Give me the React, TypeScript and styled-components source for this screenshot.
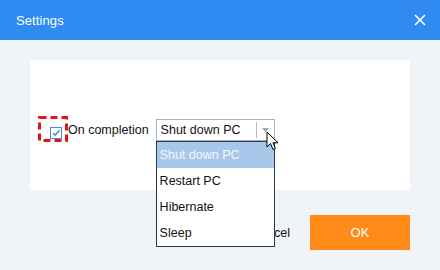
import React from "react";
import styled, { createGlobalStyle } from "styled-components";

const Global = createGlobalStyle`
  html, body { margin: 0; padding: 0; }
  body {
    width: 440px;
    height: 270px;
    overflow: hidden;
    background: #f0f4f9;
    font-family: "Liberation Sans", Arial, sans-serif;
  }
`;

const Dialog = styled.div`
  width: 440px;
  height: 270px;
  display: flex;
  flex-direction: column;
  background: #f0f4f9;
`;

const TitleBar = styled.div`
  height: 40px;
  flex: none;
  background: #2f8bf1;
  display: flex;
  align-items: center;
  justify-content: space-between;
  padding: 0 13px 0 16px;
  color: #ffffff;
`;

const Title = styled.span`
  font-size: 13px;
  letter-spacing: 0.1px;
`;

const CloseButton = styled.button`
  width: 14px;
  height: 14px;
  padding: 0;
  border: none;
  background: transparent;
  display: flex;
  align-items: center;
  justify-content: center;
`;

const Body = styled.div`
  padding: 20px 30px 0;
  display: flex;
  flex-direction: column;
`;

const Panel = styled.div`
  height: 130px;
  background: #ffffff;
  border-radius: 2px;
  display: flex;
  flex-direction: column;
  padding: 59px 0 0 20px;
  box-sizing: border-box;
`;

const Row = styled.div`
  display: flex;
  align-items: center;
  height: 22px;
`;

const CheckWrap = styled.div`
  position: relative;
  width: 12px;
  height: 12px;
  margin-top: 2px;
  margin-right: 6px;
`;

const Highlight = styled.svg`
  position: absolute;
  left: -12px;
  top: -9px;
  width: 30px;
  height: 26px;
  overflow: visible;
`;

const Label = styled.span`
  font-size: 12.5px;
  color: #111;
  margin-right: 7px;
`;

const Select = styled.div`
  position: relative;
  width: 119px;
  height: 22px;
  box-sizing: border-box;
  border: 1px solid #a9b3bf;
  background: #fff;
  display: flex;
  align-items: center;
  z-index: 2;
`;

const SelectValue = styled.span`
  flex: 1;
  padding-left: 4px;
  font-size: 12.5px;
  color: #111;
  white-space: nowrap;
`;

const ArrowBox = styled.div`
  width: 17px;
  height: 16px;
  border-left: 1px solid #b5bcc6;
  display: flex;
  align-items: center;
  justify-content: center;
`;

const List = styled.ul`
  position: absolute;
  left: -1px;
  top: 21px;
  width: 119px;
  margin: 0;
  padding: 0;
  list-style: none;
  background: #fff;
  border: 1px solid #2d3a48;
  box-sizing: border-box;
`;

const Item = styled.li<{ $active?: boolean }>`
  height: 26px;
  display: flex;
  align-items: center;
  padding-left: 3px;
  font-size: 12.5px;
  color: ${(p) => (p.$active ? "#f4f8fd" : "#111")};
  background: ${(p) => (p.$active ? "#a7c8ea" : "#fff")};
`;

const Cursor = styled.svg`
  position: absolute;
  left: 109px;
  top: 11px;
  width: 14px;
  height: 21px;
`;

const Footer = styled.div`
  display: flex;
  justify-content: flex-end;
  align-items: center;
  gap: 20px;
  padding: 25px 30px 0;
`;

const CancelButton = styled.button`
  border: none;
  background: transparent;
  padding: 0;
  font-family: "Liberation Sans", Arial, sans-serif;
  font-size: 12.5px;
  color: #111;
`;

const OkButton = styled.button`
  width: 100px;
  height: 35px;
  border: none;
  background: #ff8a17;
  color: #fff;
  font-family: "Liberation Sans", Arial, sans-serif;
  font-size: 13px;
`;

const options = ["Shut down PC", "Restart PC", "Hibernate", "Sleep"];

export default function App() {
  return (
    <>
      <Global />
      <Dialog>
        <TitleBar>
          <Title>Settings</Title>
          <CloseButton aria-label="close">
            <svg width="12" height="12" viewBox="0 0 12 12">
              <path d="M1 1L11 11M11 1L1 11" stroke="#fff" strokeWidth="1.6" />
            </svg>
          </CloseButton>
        </TitleBar>
        <Body>
          <Panel>
            <Row>
              <CheckWrap>
                <svg width="12" height="12" viewBox="0 0 12 12">
                  <rect x="0.5" y="0.5" width="11" height="11" fill="#fff" stroke="#4a90e2" />
                  <path d="M3 6L5.2 8.3L9.5 3.2" fill="none" stroke="#3a86dd" strokeWidth="1.4" />
                </svg>
                <Highlight viewBox="0 0 30 26">
                  <rect
                    x="1.5"
                    y="1.5"
                    width="27"
                    height="23"
                    fill="none"
                    stroke="#e3141b"
                    strokeWidth="3"
                    strokeDasharray="7 4"
                  />
                </Highlight>
              </CheckWrap>
              <Label>On completion</Label>
              <Select>
                <SelectValue>Shut down PC</SelectValue>
                <ArrowBox>
                  <svg width="7" height="4" viewBox="0 0 7 4">
                    <path d="M0 0H7L3.5 4Z" fill="#9aa7b6" />
                  </svg>
                </ArrowBox>
                <List>
                  {options.map((o, i) => (
                    <Item key={o} $active={i === 0}>
                      {o}
                    </Item>
                  ))}
                </List>
                <Cursor viewBox="0 0 14 21">
                  <path
                    d="M1 1V16L4.5 12.5L7 18.5L9.5 17.5L7 11.8H12Z"
                    fill="#fff"
                    stroke="#000"
                    strokeWidth="1"
                    strokeLinejoin="round"
                  />
                </Cursor>
              </Select>
            </Row>
          </Panel>
        </Body>
        <Footer>
          <CancelButton>Cancel</CancelButton>
          <OkButton>OK</OkButton>
        </Footer>
      </Dialog>
    </>
  );
}
